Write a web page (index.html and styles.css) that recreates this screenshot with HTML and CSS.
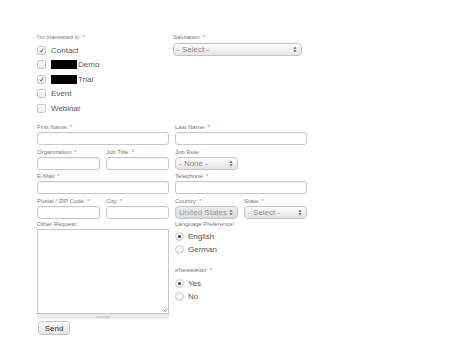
FILE: index.html
```html
<!DOCTYPE html>
<html lang="en">
<head>
    <meta charset="UTF-8">
    <title>Contact Request</title>
    <link rel="stylesheet" href="styles.css">
</head>
<body>
    <form class="form">
        <div class="row top">
            <div class="col">
                <div class="label">I'm interested in: <span class="req">*</span></div>
                <ul class="options">
                    <li><span class="check checked"><svg viewBox="0 0 9 9"><path d="M2.4 4.6 L4 6.6 L6.8 1.8" /></svg></span>Contact</li>
                    <li><span class="check"></span><span class="redact"></span>Demo</li>
                    <li><span class="check checked"><svg viewBox="0 0 9 9"><path d="M2.4 4.6 L4 6.6 L6.8 1.8" /></svg></span><span class="redact"></span>Trial</li>
                    <li><span class="check"></span>Event</li>
                    <li><span class="check"></span>Webinar</li>
                </ul>
            </div>
            <div class="col salutation">
                <div class="label">Salutation: <span class="req">*</span></div>
                <div class="select wide">- Select -<svg class="arrows" viewBox="0 0 5 8"><path d="M2.5 0.5 L4.5 3 H0.5 Z M2.5 7.5 L4.5 5 H0.5 Z" /></svg></div>
            </div>
        </div>

        <div class="row">
            <div class="col field">
                <div class="label">First Name: <span class="req">*</span></div>
                <div class="input"></div>
            </div>
            <div class="col field">
                <div class="label">Last Name: <span class="req">*</span></div>
                <div class="input"></div>
            </div>
        </div>

        <div class="row">
            <div class="col pair">
                <div class="field half">
                    <div class="label">Organization: <span class="req">*</span></div>
                    <div class="input"></div>
                </div>
                <div class="field half">
                    <div class="label">Job Title: <span class="req">*</span></div>
                    <div class="input"></div>
                </div>
            </div>
            <div class="col field">
                <div class="label">Job Role:</div>
                <div class="select half">- None -<svg class="arrows" viewBox="0 0 5 8"><path d="M2.5 0.5 L4.5 3 H0.5 Z M2.5 7.5 L4.5 5 H0.5 Z" /></svg></div>
            </div>
        </div>

        <div class="row">
            <div class="col field">
                <div class="label">E-Mail: <span class="req">*</span></div>
                <div class="input"></div>
            </div>
            <div class="col field">
                <div class="label">Telephone: <span class="req">*</span></div>
                <div class="input"></div>
            </div>
        </div>

        <div class="row">
            <div class="col pair">
                <div class="field half">
                    <div class="label">Postal / ZIP Code: <span class="req">*</span></div>
                    <div class="input"></div>
                </div>
                <div class="field half">
                    <div class="label">City: <span class="req">*</span></div>
                    <div class="input"></div>
                </div>
            </div>
            <div class="col pair">
                <div class="field half">
                    <div class="label">Country: <span class="req">*</span></div>
                    <div class="select disabled">United States<svg class="arrows" viewBox="0 0 5 8"><path d="M2.5 0.5 L4.5 3 H0.5 Z M2.5 7.5 L4.5 5 H0.5 Z" /></svg></div>
                </div>
                <div class="field half">
                    <div class="label">State: <span class="req">*</span></div>
                    <div class="select">- Select -<svg class="arrows" viewBox="0 0 5 8"><path d="M2.5 0.5 L4.5 3 H0.5 Z M2.5 7.5 L4.5 5 H0.5 Z" /></svg></div>
                </div>
            </div>
        </div>

        <div class="row">
            <div class="col">
                <div class="label">Other Request:</div>
                <div class="textarea"><span class="corner"></span></div>
                <div class="grippie"><span></span></div>
            </div>
            <div class="col">
                <div class="label">Language Preference:</div>
                <ul class="options radios">
                    <li><span class="radio checked"></span>English</li>
                    <li><span class="radio"></span>German</li>
                </ul>
                <div class="label newsletter">eNewsletter: <span class="req">*</span></div>
                <ul class="options radios">
                    <li><span class="radio checked"></span>Yes</li>
                    <li><span class="radio"></span>No</li>
                </ul>
            </div>
        </div>

        <button type="button" class="send">Send</button>
    </form>
</body>
</html>
```

FILE: styles.css
```css
body {
    margin: 0;
    background: #fff;
    font-family: "Liberation Sans", Arial, sans-serif;
    color: #333;
}
.form {
    padding: 33px 0 0 37px;
}
.row {
    display: flex;
    gap: 6px;
}
.col {
    width: 132px;
}
.top {
    margin-bottom: 6.5px;
}
.salutation {
    margin-left: -2px;
}
.label {
    font-size: 6px;
    line-height: 9px;
    height: 9px;
    color: #777;
    white-space: nowrap;
}
.field .label {
    height: 10px;
    line-height: 10px;
}
.req {
    color: #dd6a6a;
}
.options {
    list-style: none;
    margin: 1px 0 0;
    padding: 0;
}
.options li {
    display: flex;
    align-items: center;
    height: 14.5px;
    font-size: 8px;
    color: #555;
}
.check, .radio {
    width: 9px;
    height: 9px;
    box-sizing: border-box;
    border: 1px solid #c8c8c8;
    background: linear-gradient(#fff, #ebebeb);
    margin-right: 5px;
    flex-shrink: 0;
    display: flex;
    align-items: center;
    justify-content: center;
}
.check {
    border-radius: 2px;
}
.check svg {
    width: 9px;
    height: 9px;
    fill: none;
    stroke: #444;
    stroke-width: 1;
}
.redact {
    display: inline-block;
    width: 26px;
    height: 9px;
    background: #000;
    margin-right: 1px;
}
.radios {
    margin-top: 1px;
}
.radios li {
    height: 13px;
}
.radio {
    border-radius: 50%;
    margin-right: 4px;
}
.radio.checked::after {
    content: "";
    width: 3px;
    height: 3px;
    border-radius: 50%;
    background: #444;
}
.newsletter {
    margin-top: 8.5px;
    height: 11px;
    line-height: 11px;
}
.field {
    margin-bottom: 1.6px;
}
.pair {
    display: flex;
    gap: 6px;
}
.half {
    width: 63px;
}
.input {
    height: 13px;
    box-sizing: border-box;
    border: 1px solid #c8c8c8;
    border-radius: 3px;
    background: #fff;
    box-shadow: inset 0 1px 1px rgba(0, 0, 0, 0.04);
}
.select {
    position: relative;
    height: 13px;
    box-sizing: border-box;
    border: 1px solid #c4c4c4;
    border-radius: 4px;
    background: linear-gradient(#fdfdfd, #e4e4e4);
    font-size: 8px;
    line-height: 11px;
    color: #888;
    padding-left: 3px;
    white-space: nowrap;
    overflow: hidden;
}
.select.wide {
    width: 129px;
    margin-top: 1px;
}
.select.half {
    width: 63px;
}
.select.disabled {
    background: linear-gradient(#ececec, #dcdcdc);
    color: #9a9a9a;
    padding-left: 3px;
}
.arrows {
    position: absolute;
    right: 4px;
    top: 2px;
    width: 4px;
    height: 7px;
    fill: #555;
}
.disabled .arrows {
    fill: #666;
}
.textarea {
    position: relative;
    height: 85px;
    box-sizing: border-box;
    border: 1px solid #c8c8c8;
    background: #fff;
}
.corner {
    position: absolute;
    right: 1px;
    bottom: 1px;
    width: 4px;
    height: 4px;
    background: linear-gradient(135deg, transparent 45%, #aaa 50%, transparent 60%, transparent 70%, #aaa 75%, transparent 85%);
}
.grippie {
    height: 5px;
    background: #ebebeb;
    display: flex;
    justify-content: center;
    align-items: center;
}
.grippie span {
    width: 14px;
    height: 2px;
    background: #d2d2d2;
}
.send {
    display: block;
    margin: 2px 0 0 1px;
    width: 32px;
    height: 14px;
    padding: 0;
    box-sizing: border-box;
    border: 1px solid #c8c8c8;
    border-radius: 3px;
    background: linear-gradient(#fff, #e2e2e2);
    font-family: "Liberation Sans", Arial, sans-serif;
    font-size: 8px;
    color: #333;
}
```
